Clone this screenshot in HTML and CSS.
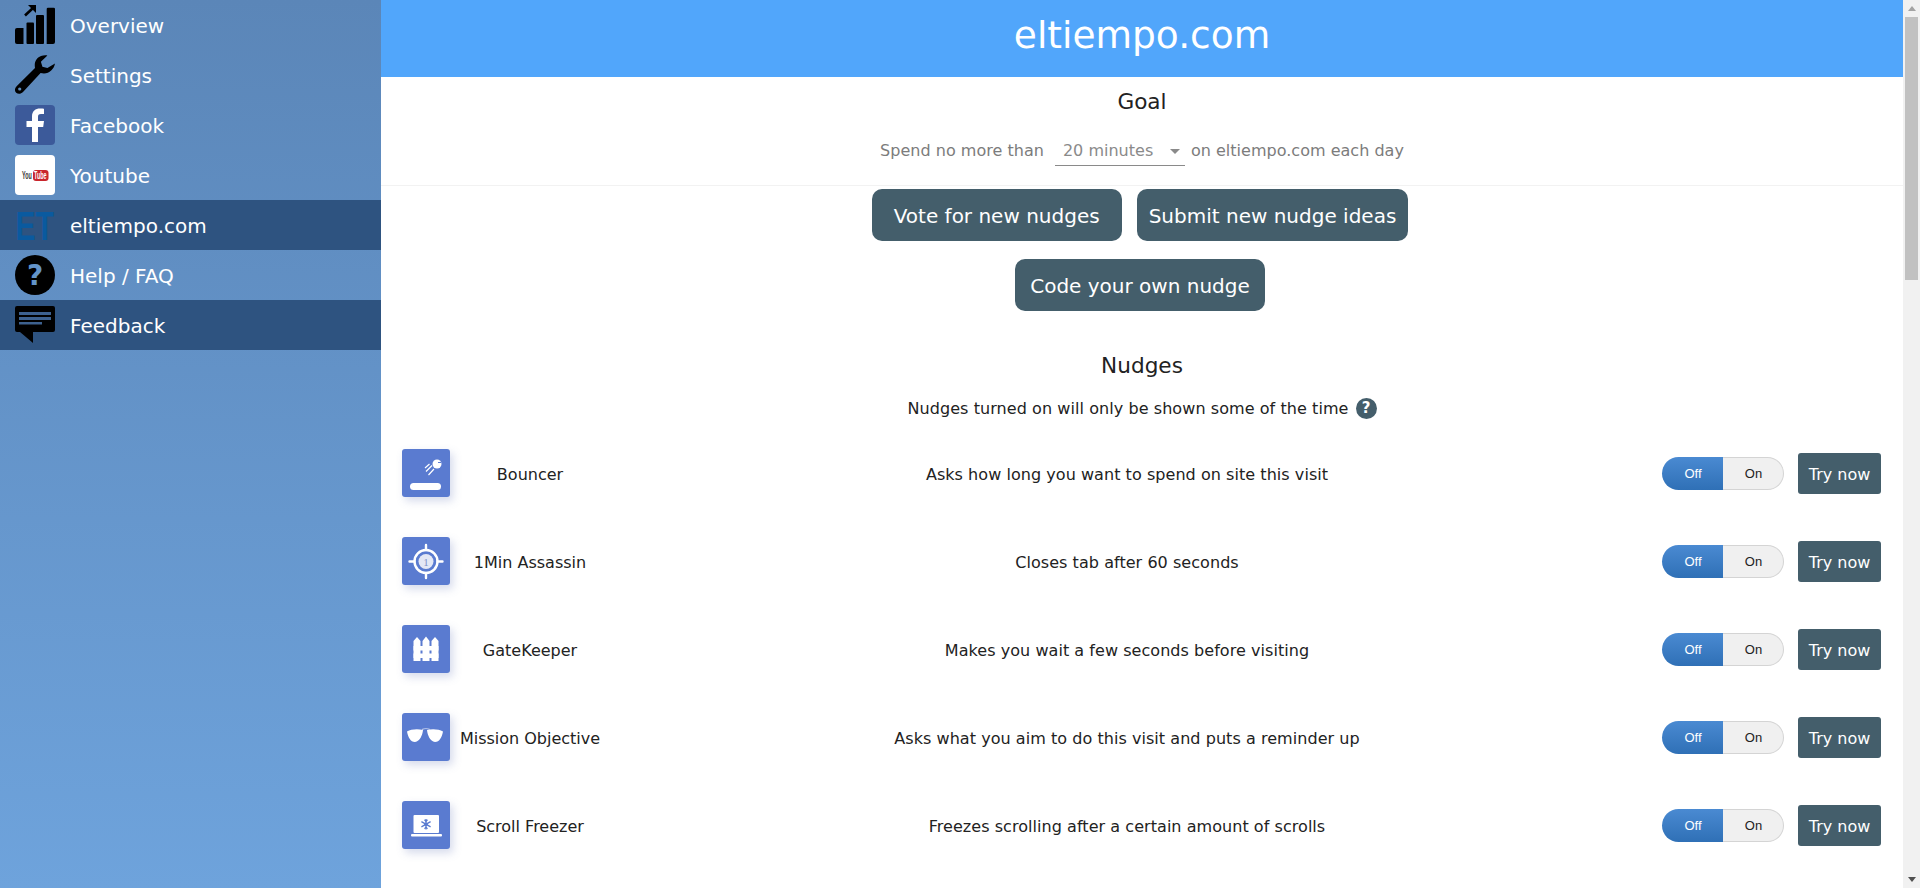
FILE: index.html
```html
<!DOCTYPE html>
<html>
  <head>
    <meta name="viewport" content="width=device-width, initial-scale=1.0">
    <title>eltiempo.com</title>
    <link rel="stylesheet" href="styles.css">
  </head>
  <body>
    <div class="sidebar">
      <a class="nav-item">
        <svg class="nav-icon" viewBox="0 0 40 40">
          <path d="M0 25a2 2 0 0 1 2-2h6.500v16H2a2 2 0 0 1-2-2z"/>
          <rect x="11.500" y="17.500" width="7.500" height="21.500" rx="1"/>
          <rect x="21" y="10" width="8" height="29" rx="1"/>
          <path d="M31.700 4a1.300 1.300 0 0 1 1.300-1.300h5.700A1.300 1.300 0 0 1 40 4v33a2 2 0 0 1-2 2h-6.300z"/>
          <path d="M10 10.500 18 3" stroke="#000" stroke-width="2.600" fill="none"/>
          <path d="M13 0h8v8z"/>
        </svg>
        <span>Overview</span>
      </a>
      <a class="nav-item">
        <svg class="nav-icon" viewBox="0 0 40 40">
          <path d="M40 8.500c-1 5.500-5.500 10-11 10-1.300 0-2.300-.2-3.400-.5L8 37c-2.200 2.200-5 2.400-6.800.7-1.800-1.700-1.600-4.400.4-6.400L20 13c-1-5.500 1-10 6-12 2-.7 4-.8 6.400-.6l-6.500 6.300 1.500 5 5 1.300z"/>
          <circle cx="4.700" cy="34" r="1.600" fill="#5f8cbd"/>
        </svg>
        <span>Settings</span>
      </a>
      <a class="nav-item">
        <svg class="nav-icon" viewBox="0 0 40 40">
          <rect width="40" height="40" rx="4" fill="#3c5a9a"/>
          <path d="M17 37V22h-5.500v-6H17v-4.500C17 6 20.500 3.500 25 3.500c2 0 3.500.1 4 .2v5.300h-3c-2.500 0-3 1.200-3 3V16h6l-.8 6H23v15z" fill="#fff"/>
        </svg>
        <span>Facebook</span>
      </a>
      <a class="nav-item">
        <svg class="nav-icon" viewBox="0 0 40 40">
          <rect width="40" height="40" rx="4" fill="#fff"/>
          <rect x="18" y="15" width="15.500" height="11" rx="3" fill="#c9252c"/>
          <text class="yt-you" transform="translate(7 24) scale(0.9 1.700)">You</text>
          <text class="yt-tube" transform="translate(19 24) scale(0.9 1.700)">Tube</text>
        </svg>
        <span>Youtube</span>
      </a>
      <a class="nav-item active">
        <svg class="nav-icon" viewBox="0 0 40 40">
          <text class="et-logo" transform="translate(0.500 35) scale(1 1.370)">ET</text>
        </svg>
        <span>eltiempo.com</span>
      </a>
      <a class="nav-item">
        <svg class="nav-icon" viewBox="0 0 40 40">
          <circle cx="20" cy="20" r="20"/>
          <text class="help-mark" x="20" y="30" text-anchor="middle">?</text>
        </svg>
        <span>Help / FAQ</span>
      </a>
      <a class="nav-item active">
        <svg class="nav-icon" viewBox="0 0 40 40">
          <path d="M2 1h36a2 2 0 0 1 2 2v22a2 2 0 0 1-2 2H18v11L5 27H2a2 2 0 0 1-2-2V3a2 2 0 0 1 2-2z"/>
          <path d="M4 7h32v3H4zM4 12h32v3H4zM4 17h23v2.500H4z" fill="#3d618f"/>
        </svg>
        <span>Feedback</span>
      </a>
    </div>

    <div class="main">
      <div class="site-title">eltiempo.com</div>

      <div class="goal">
        <h2 class="goal-title">Goal</h2>
        <div class="goal-row">
          <span>Spend no more than</span>
          <span class="goal-select">20 minutes<i class="select-arrow"></i></span>
          <span>on eltiempo.com each day</span>
        </div>
      </div>

      <div class="big-buttons">
        <a class="big-button">Vote for new nudges</a>
        <a class="big-button">Submit new nudge ideas</a>
        <a class="big-button">Code your own nudge</a>
      </div>

      <h2 class="nudges-title">Nudges</h2>
      <div class="nudges-note">
        <span>Nudges turned on will only be shown some of the time</span>
        <span class="note-help">?</span>
      </div>

      <div class="nudge-list">
        <div class="nudge">
          <svg class="nudge-icon" viewBox="0 0 48 48">
            <rect x="8" y="34" width="31" height="7" rx="3.500" fill="#fff"/>
            <circle cx="35" cy="15" r="4.500" fill="#fff"/>
            <path d="M36 13.500h3" stroke="#5a7bd0" stroke-width="1"/>
            <path d="M30 16.500 24 22.500M32 20 26.500 26M27.500 15 23 19" stroke="#fff" stroke-width="1.200" fill="none"/>
          </svg>
          <div class="nudge-name">Bouncer</div>
          <div class="nudge-desc">Asks how long you want to spend on site this visit</div>
          <div class="toggle"><span class="toggle-off">Off</span><span class="toggle-on">On</span></div>
          <a class="try-button">Try now</a>
        </div>

        <div class="nudge">
          <svg class="nudge-icon" viewBox="0 0 48 48">
            <circle cx="24" cy="24.500" r="11.500" fill="none" stroke="#fff" stroke-width="2.400"/>
            <circle cx="24" cy="24.500" r="7.500" fill="#e4e8f5"/>
            <path d="M24 8v5M24 36v5M7.500 24.500h5M35.500 24.500h5" stroke="#fff" stroke-width="2.400" stroke-linecap="round"/>
            <text class="target-num" x="24" y="28.500" text-anchor="middle">1</text>
          </svg>
          <div class="nudge-name">1Min Assassin</div>
          <div class="nudge-desc">Closes tab after 60 seconds</div>
          <div class="toggle"><span class="toggle-off">Off</span><span class="toggle-on">On</span></div>
          <a class="try-button">Try now</a>
        </div>

        <div class="nudge">
          <svg class="nudge-icon" viewBox="0 0 48 48">
            <path d="M11.500 36V16l3.500-4 3.500 4v20zM20.500 36V16l3.500-4.500 3.500 4.500v20zM29.500 36V16l3.500-4 3.500 4v20z" fill="#fff"/>
            <path d="M11.500 21h25v4.500h-25zM11.500 28.500h25V33h-25z" fill="#fff"/>
          </svg>
          <div class="nudge-name">GateKeeper</div>
          <div class="nudge-desc">Makes you wait a few seconds before visiting</div>
          <div class="toggle"><span class="toggle-off">Off</span><span class="toggle-on">On</span></div>
          <a class="try-button">Try now</a>
        </div>

        <div class="nudge">
          <svg class="nudge-icon" viewBox="0 0 48 48">
            <path d="M5 18.500c4-2.500 11-3 16-1.500-.5 5-3 11.500-8 12C8.500 29 6 24 5 18.500zM41 18.500c-4-2.500-11-3-16-1.500 .5 5 3 11.500 8 12 4.500 0 7-5 8-10.500z" fill="#fff"/>
            <path d="M20 16.500c2-1 6-1 8 0" stroke="#c8d3ef" stroke-width="1.200" fill="none"/>
          </svg>
          <div class="nudge-name">Mission Objective</div>
          <div class="nudge-desc">Asks what you aim to do this visit and puts a reminder up</div>
          <div class="toggle"><span class="toggle-off">Off</span><span class="toggle-on">On</span></div>
          <a class="try-button">Try now</a>
        </div>

        <div class="nudge">
          <svg class="nudge-icon" viewBox="0 0 48 48">
            <rect x="11.500" y="14" width="25.500" height="18" rx="1" fill="#fff"/>
            <rect x="9" y="33" width="31" height="2.500" rx="1" fill="#fff"/>
            <g stroke="#5a7bd0" stroke-width="1.300" fill="none">
              <path d="M24 18v10.600M19.400 20.600l9.200 5.300M19.400 25.900l9.200-5.300"/>
              <path d="M22.500 18.800 24 20.300l1.500-1.500M22.500 27.800 24 26.300l1.500 1.500"/>
            </g>
            <circle cx="24" cy="23.300" r="1.800" fill="#5a7bd0"/>
          </svg>
          <div class="nudge-name">Scroll Freezer</div>
          <div class="nudge-desc">Freezes scrolling after a certain amount of scrolls</div>
          <div class="toggle"><span class="toggle-off">Off</span><span class="toggle-on">On</span></div>
          <a class="try-button">Try now</a>
        </div>
      </div>
    </div>

    <div class="scrollbar">
      <i class="scroll-up"></i>
      <div class="scroll-track"><div class="scroll-thumb"></div></div>
      <i class="scroll-down"></i>
    </div>
  </body>
</html>
```

FILE: styles.css
```css
/* Page frame */
html, body {
  height: 100%;
}

body {
  margin: 0;
  display: flex;
  height: 888px;
  overflow: hidden;
  background-color: #fff;
  color: #222;
  font-family: "DejaVu Sans", Verdana, sans-serif;
  font-size: 16px;
}

/* Left navigation */
.sidebar {
  width: 381px;
  flex: none;
  background: linear-gradient(#5b86b8, #6ea3dc);
}

.nav-item {
  display: flex;
  align-items: center;
  height: 50px;
  padding-left: 15px;
  color: #fff;
  font-size: 20px;
}

.nav-item span {
  padding-top: 2px;
}

.nav-item.active {
  background-color: #2e5380;
}

.nav-icon {
  width: 40px;
  height: 40px;
  flex: none;
  margin-right: 15px;
}

.yt-you {
  font: bold 6px "Liberation Sans", sans-serif;
  fill: #3a3a3a;
}

.yt-tube {
  font: bold 6px "Liberation Sans", sans-serif;
  fill: #fff;
}

.et-logo {
  font: bold 30px "Liberation Sans", sans-serif;
  fill: #0a5a9f;
}

.help-mark {
  font: bold 28px "DejaVu Sans", sans-serif;
  fill: #6394c9;
}

.target-num {
  font: 11px "Liberation Serif", serif;
  fill: #7f92c9;
}

/* Main column */
.main {
  flex: 1;
  min-width: 0;
  overflow: hidden;
}

.site-title {
  height: 77px;
  line-height: 71px;
  background-color: #51a6fb;
  color: #fff;
  font-size: 37.500px;
  text-align: center;
}

.goal {
  padding: 10px 0 20px;
  border-bottom: 1px solid #f2f2f2;
  text-align: center;
}

.goal-title,
.nudges-title {
  margin: 0;
  padding-top: 1px;
  height: 27px;
  font-size: 21.600px;
  font-weight: normal;
  line-height: 28px;
  text-align: center;
}

.goal-row {
  display: flex;
  justify-content: center;
  align-items: center;
  height: 30px;
  margin-top: 20px;
  color: #7c7c7c;
  letter-spacing: 0.02px;
}

.goal-select {
  position: relative;
  width: 122px;
  height: 26px;
  margin: 4px 6px 0 11px;
  padding-left: 8px;
  border-bottom: 1px solid #8a8a8a;
  color: #8a8a8a;
  line-height: 24px;
  text-align: left;
}

.select-arrow {
  position: absolute;
  right: 5px;
  top: 10px;
  border-left: 5px solid transparent;
  border-right: 5px solid transparent;
  border-top: 5px solid #8a8a8a;
}

/* Big dark buttons */
.big-buttons {
  display: flex;
  flex-wrap: wrap;
  justify-content: center;
  gap: 18px 15px;
  width: 560px;
  margin: 3px auto 0;
  transform: translateX(-2px);
}

.big-button {
  box-sizing: border-box;
  min-width: 250px;
  height: 52px;
  padding: 0 12px;
  border-radius: 10px;
  background-color: #445e6b;
  color: #fff;
  font-size: 20px;
  line-height: 54px;
  text-align: center;
}

.nudges-title {
  margin-top: 40px;
}

.nudges-note {
  display: flex;
  justify-content: center;
  align-items: center;
  gap: 7px;
  height: 24px;
  margin-top: 17px;
  letter-spacing: 0.07px;
}

.note-help {
  width: 21px;
  height: 21px;
  border-radius: 50%;
  background-color: #445e6b;
  color: #fff;
  font-size: 15px;
  font-weight: bold;
  line-height: 21px;
  text-align: center;
}

/* Nudge rows */
.nudge-list {
  margin-top: 9px;
}

.nudge {
  display: flex;
  align-items: center;
  height: 88px;
  padding: 0 22px 0 21px;
}

.nudge-icon {
  width: 48px;
  height: 48px;
  flex: none;
  border-radius: 3px;
  background-color: #5a7bd0;
  box-shadow: 3px 4px 8px rgba(90, 110, 180, 0.25);
}

.nudge-name {
  width: 160px;
  flex: none;
  padding-top: 2px;
  text-align: center;
}

.nudge-desc {
  flex: 1;
  padding-top: 2px;
  letter-spacing: 0.05px;
  text-align: center;
}

.toggle {
  display: flex;
  box-sizing: border-box;
  width: 122px;
  height: 33px;
  margin-left: 18px;
  flex: none;
  font-family: "Liberation Sans", Arial, sans-serif;
  font-size: 13px;
  line-height: 31px;
  text-align: center;
}

.toggle-off {
  width: 60px;
  padding-left: 1px;
  border-radius: 17px 0 0 17px;
  background: linear-gradient(#4a8ad2, #2f70b6);
  color: #fff;
  line-height: 33px;
}

.toggle-on {
  flex: 1;
  padding-left: 1px;
  border: 1px solid #d4d4d4;
  border-left: none;
  border-radius: 0 17px 17px 0;
  background-color: #f0f0f0;
  color: #222;
}

.try-button {
  box-sizing: border-box;
  width: 83px;
  height: 41px;
  margin-left: 14px;
  flex: none;
  border-radius: 3px;
  background-color: #445e6b;
  color: #fff;
  line-height: 43px;
  text-align: center;
}

/* Fake browser scrollbar */
.scrollbar {
  display: flex;
  flex-direction: column;
  align-items: center;
  width: 17px;
  flex: none;
  background-color: #f1f1f1;
}

.scroll-up,
.scroll-down {
  width: 0;
  height: 0;
  margin: 6px 0;
  border-left: 4px solid transparent;
  border-right: 4px solid transparent;
}

.scroll-up {
  border-bottom: 5px solid #a3a3a3;
}

.scroll-down {
  border-top: 5px solid #505050;
}

.scroll-track {
  flex: 1;
  width: 100%;
}

.scroll-thumb {
  width: 13px;
  height: 263px;
  margin: 0 2px;
  background-color: #c1c1c1;
}
```
